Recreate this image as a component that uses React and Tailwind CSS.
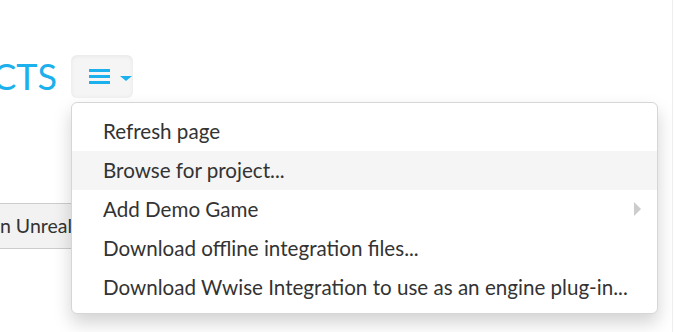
import React from "react";

const items = [
  { label: "Refresh page" },
  { label: "Browse for project...", active: true },
  { label: "Add Demo Game", sub: true },
  { label: "Download offline integration files..." },
  { label: "Download Wwise Integration to use as an engine plug-in..." },
];

export default function App() {
  return (
    <div
      className="w-[675px] h-[332px] bg-white overflow-hidden flex"
      style={{ fontFamily: "Lato, 'Open Sans', sans-serif" }}
    >
      <div className="relative w-[673px] h-full border-r border-[#eeeeee] overflow-hidden">
        <div className="flex items-center pt-[55px]">
          <div className="w-[57px] shrink-0 flex justify-end text-[36px] leading-[43px] text-[#1cb0ec] whitespace-nowrap">
            <span>PROJECTS</span>
          </div>
          <div className="ml-[14px] w-[62px] h-[43px] rounded-[6px] bg-[#f5f5f5] shadow-[inset_0_1px_5px_rgba(0,0,0,0.06)] flex items-center">
            <div className="ml-[18px] flex flex-col gap-[3.5px]">
              <div className="w-[21px] h-[2.5px] bg-[#1cb0ec]" />
              <div className="w-[21px] h-[2.5px] bg-[#1cb0ec]" />
              <div className="w-[21px] h-[2.5px] bg-[#1cb0ec]" />
            </div>
            <div className="ml-[10px] mt-[3px] w-0 h-0 border-l-[6px] border-r-[6px] border-t-[5px] border-l-transparent border-r-transparent border-t-[#1cb0ec]" />
          </div>
        </div>

        <div className="mt-[105px] w-[130px] h-[46px] bg-[#f2f2f2] border-y border-[#cccccc] flex items-center text-[19.5px] text-[#333333] whitespace-nowrap">
          n Unreal Engine
        </div>

        <div className="absolute left-[71px] top-[102px] w-[587px] bg-white border border-[#d6d6d6] rounded-[6px] shadow-[0_9px_18px_rgba(0,0,0,0.175)] pt-[9px] pb-[6px]">
          {items.map((it) => (
            <div
              key={it.label}
              className={
                "relative h-[39px] flex items-center pl-[31px] text-[20.6px] text-[#333333] whitespace-nowrap " +
                (it.active ? "bg-[#f5f5f5]" : "")
              }
            >
              {it.label}
              {it.sub && (
                <div className="absolute right-[16px] top-[12px] w-0 h-0 border-t-[7px] border-b-[7px] border-l-[7px] border-t-transparent border-b-transparent border-l-[#cccccc]" />
              )}
            </div>
          ))}
        </div>
      </div>
    </div>
  );
}
